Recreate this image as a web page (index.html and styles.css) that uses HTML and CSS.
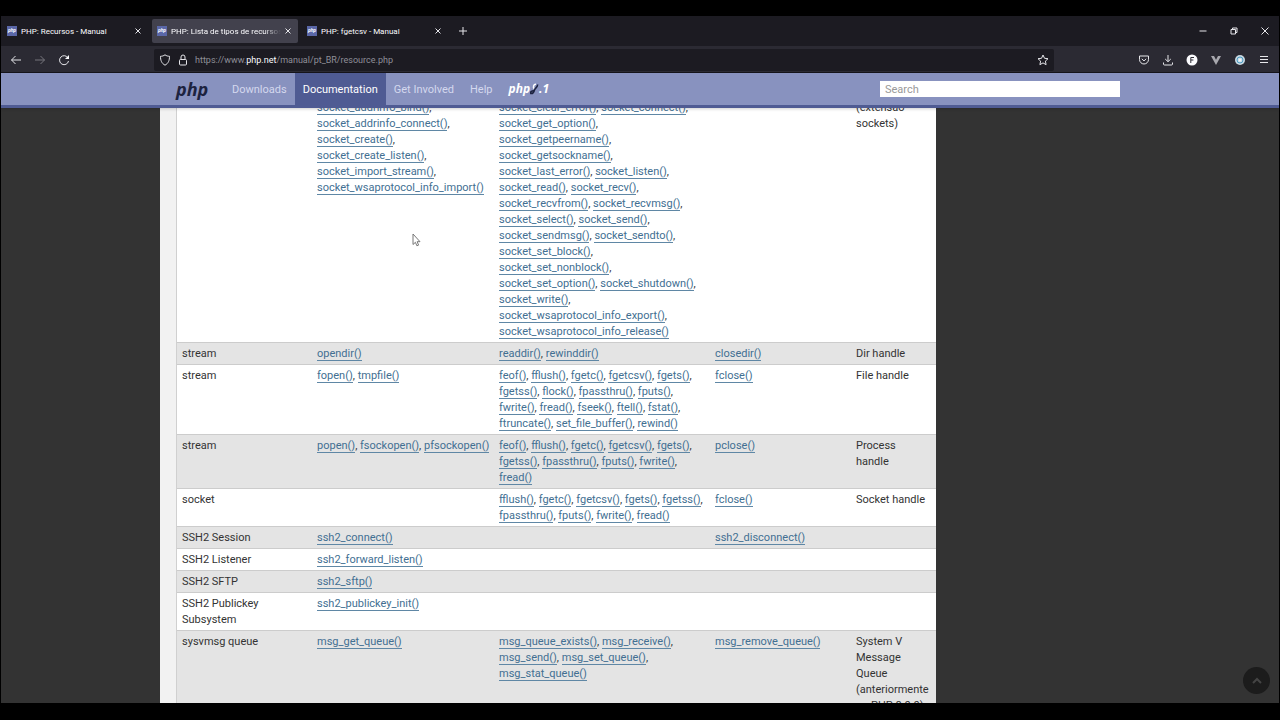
FILE: index.html
```html
<!DOCTYPE html>
<html lang="pt-BR">
<head>
    <meta charset="UTF-8">
    <meta name="viewport" content="width=device-width, initial-scale=1.0">
    <title>PHP: Lista de tipos de recursos - Manual</title>
    <link rel="stylesheet" href="styles.css">
</head>
<body>

<div class="window">

    <!-- Abas -->
    <div class="tabs">
        <div class="tab">
            <span class="favicon">php</span>
            <span class="tab-title">PHP: Recursos - Manual</span>
            <button class="icon-btn" aria-label="Fechar aba"><svg width="6" height="6" viewBox="0 0 6 6"><path d="M.5 .5l5 5M5.5 .5l-5 5"/></svg></button>
        </div>
        <div class="tab active">
            <span class="favicon">php</span>
            <span class="tab-title">PHP: Lista de tipos de recursos</span>
            <button class="icon-btn" aria-label="Fechar aba"><svg width="6" height="6" viewBox="0 0 6 6"><path d="M.5 .5l5 5M5.5 .5l-5 5"/></svg></button>
        </div>
        <div class="tab">
            <span class="favicon">php</span>
            <span class="tab-title">PHP: fgetcsv - Manual</span>
            <button class="icon-btn" aria-label="Fechar aba"><svg width="6" height="6" viewBox="0 0 6 6"><path d="M.5 .5l5 5M5.5 .5l-5 5"/></svg></button>
        </div>
        <button class="icon-btn new-tab" aria-label="Nova aba"><svg width="8" height="8" viewBox="0 0 8 8"><path d="M4 0v8M0 4h8"/></svg></button>
        <div class="controls">
            <button class="icon-btn" aria-label="Minimizar"><svg width="8" height="8" viewBox="0 0 8 8"><path d="M.5 4h7"/></svg></button>
            <button class="icon-btn" aria-label="Restaurar"><svg width="8" height="8" viewBox="0 0 8 8"><path d="M1 2.5h4.500v4.500H1zM2.500 2.500V1H7v4.500H5.500"/></svg></button>
            <button class="icon-btn" aria-label="Fechar"><svg width="8" height="8" viewBox="0 0 8 8"><path d="M.5 .5l7 7M7.500 .5l-7 7"/></svg></button>
        </div>
    </div>

    <!-- Barra de endereço -->
    <div class="toolbar">
        <div class="nav-buttons">
            <button class="icon-btn" aria-label="Voltar"><svg width="12" height="12" viewBox="0 0 12 12"><path d="M11 6H1.500M5.500 2l-4 4 4 4"/></svg></button>
            <button class="icon-btn dim" aria-label="Avançar"><svg width="12" height="12" viewBox="0 0 12 12"><path d="M1 6h9.500M6.500 2l4 4-4 4"/></svg></button>
            <button class="icon-btn" aria-label="Recarregar"><svg width="12" height="12" viewBox="0 0 12 12"><path d="M10 4A4.500 4.500 0 1 0 10.500 7"/><path d="M11 1v4H7z" class="fill"/></svg></button>
        </div>
        <div class="urlbar">
            <svg width="12" height="12" viewBox="0 0 12 12"><path d="M6 .8C4.500 2 3 2.200 1.500 2.300c0 4 1 7 4.500 8.900 3.500-1.900 4.500-4.900 4.500-8.900C9 2.200 7.500 2 6 .8z"/></svg>
            <svg width="12" height="12" viewBox="0 0 12 12"><rect x="2.500" y="5.500" width="7" height="5.500" rx="1"/><path d="M4 5.500V3a2 2 0 0 1 4 0v2.500"/></svg>
            <span class="url">https://www.<b>php.net</b>/manual/pt_BR/resource.php</span>
            <button class="icon-btn" aria-label="Favoritar"><svg width="12" height="12" viewBox="0 0 12 12"><path d="M6 1l1.500 3.300 3.500.4-2.600 2.400.7 3.600L6 8.900l-3.100 1.800.7-3.600L1 4.700l3.500-.4z"/></svg></button>
        </div>
        <div class="extensions">
            <button class="icon-btn" aria-label="Pocket"><svg width="12" height="12" viewBox="0 0 12 12"><path d="M1.500 2h9v3.500a4.500 4.500 0 0 1-9 0zM3.800 4.800L6 6.900l2.200-2.100"/></svg></button>
            <button class="icon-btn" aria-label="Downloads"><svg width="12" height="12" viewBox="0 0 12 12"><path d="M6 1v6.500M3.200 5L6 7.700 8.800 5M1.500 8.500V10a1 1 0 0 0 1 1h7a1 1 0 0 0 1-1V8.500"/></svg></button>
            <button class="icon-btn" aria-label="Extensão"><svg width="12" height="12" viewBox="0 0 12 12"><circle cx="6" cy="6" r="5.500" class="fill"/><path d="M4.800 9V3.500H8M4.800 6h2.600" class="dark"/></svg></button>
            <button class="icon-btn" aria-label="Vue"><svg width="12" height="12" viewBox="0 0 12 12"><path d="M1 2h3l2 3.800L8 2h3L6 11z" class="gray"/></svg></button>
            <button class="icon-btn" aria-label="React"><svg width="12" height="12" viewBox="0 0 12 12"><circle cx="6" cy="6" r="5" fill="#c9d8e2" stroke="none"/><circle cx="6" cy="6" r="3" stroke="#4a9cc4"/><circle cx="6" cy="6" r="1.500" fill="#eef6fa" stroke="none"/></svg></button>
            <button class="icon-btn" aria-label="Menu"><svg width="12" height="12" viewBox="0 0 12 12"><path d="M2 2.500h8M2 5.500h8M2 8.500h8"/></svg></button>
        </div>
    </div>

    <div class="page">
        <header class="site-header">
            <div class="container header-inner">
                <a href="#" class="logo">php</a>
                <nav class="menu">
                    <a href="#">Downloads</a>
                    <a href="#" class="current">Documentation</a>
                    <a href="#">Get Involved</a>
                    <a href="#">Help</a>
                    <a href="#" class="release">php<svg width="9" height="12" viewBox="0 0 9 12"><path d="M4.500 6C2.500 4.500 3.500 1 6 1.200" stroke="#fff" stroke-width="1.500"/><path d="M7.500 1.500C8 4 5 5 4.500 7S3 11 .8 10.500c-.8-2 1.500-3 3-2.800" stroke="#1d2340" stroke-width="1.500"/></svg>.1</a>
                </nav>
                <input type="search" class="search" placeholder="Search" aria-label="Search">
            </div>
        </header>

        <main class="container">
            <div class="content">
                <table class="resources">
                    <colgroup>
                        <col class="col-type">
                        <col class="col-created">
                        <col class="col-used">
                        <col class="col-destroyed">
                        <col class="col-desc">
                    </colgroup>
                    <tbody>
                        <tr>
                            <td></td>
                            <td><a href="#">socket_addrinfo_bind()</a>,<br><a href="#">socket_addrinfo_connect()</a>,<br><a href="#">socket_create()</a>,<br><a href="#">socket_create_listen()</a>,<br><a href="#">socket_import_stream()</a>,<br><a href="#">socket_wsaprotocol_info_import()</a></td>
                            <td><a href="#">socket_clear_error()</a>, <a href="#">socket_connect()</a>,<br><a href="#">socket_get_option()</a>,<br><a href="#">socket_getpeername()</a>,<br><a href="#">socket_getsockname()</a>,<br><a href="#">socket_last_error()</a>, <a href="#">socket_listen()</a>,<br><a href="#">socket_read()</a>, <a href="#">socket_recv()</a>,<br><a href="#">socket_recvfrom()</a>, <a href="#">socket_recvmsg()</a>,<br><a href="#">socket_select()</a>, <a href="#">socket_send()</a>,<br><a href="#">socket_sendmsg()</a>, <a href="#">socket_sendto()</a>,<br><a href="#">socket_set_block()</a>,<br><a href="#">socket_set_nonblock()</a>,<br><a href="#">socket_set_option()</a>, <a href="#">socket_shutdown()</a>,<br><a href="#">socket_write()</a>,<br><a href="#">socket_wsaprotocol_info_export()</a>,<br><a href="#">socket_wsaprotocol_info_release()</a></td>
                            <td></td>
                            <td>(extensão<br>sockets)</td>
                        </tr>
                        <tr>
                            <td>stream</td>
                            <td><a href="#">opendir()</a></td>
                            <td><a href="#">readdir()</a>, <a href="#">rewinddir()</a></td>
                            <td><a href="#">closedir()</a></td>
                            <td>Dir handle</td>
                        </tr>
                        <tr>
                            <td>stream</td>
                            <td><a href="#">fopen()</a>, <a href="#">tmpfile()</a></td>
                            <td><a href="#">feof()</a>, <a href="#">fflush()</a>, <a href="#">fgetc()</a>, <a href="#">fgetcsv()</a>, <a href="#">fgets()</a>,<br><a href="#">fgetss()</a>, <a href="#">flock()</a>, <a href="#">fpassthru()</a>, <a href="#">fputs()</a>,<br><a href="#">fwrite()</a>, <a href="#">fread()</a>, <a href="#">fseek()</a>, <a href="#">ftell()</a>, <a href="#">fstat()</a>,<br><a href="#">ftruncate()</a>, <a href="#">set_file_buffer()</a>, <a href="#">rewind()</a></td>
                            <td><a href="#">fclose()</a></td>
                            <td>File handle</td>
                        </tr>
                        <tr>
                            <td>stream</td>
                            <td><a href="#">popen()</a>, <a href="#">fsockopen()</a>, <a href="#">pfsockopen()</a></td>
                            <td><a href="#">feof()</a>, <a href="#">fflush()</a>, <a href="#">fgetc()</a>, <a href="#">fgetcsv()</a>, <a href="#">fgets()</a>,<br><a href="#">fgetss()</a>, <a href="#">fpassthru()</a>, <a href="#">fputs()</a>, <a href="#">fwrite()</a>,<br><a href="#">fread()</a></td>
                            <td><a href="#">pclose()</a></td>
                            <td>Process<br>handle</td>
                        </tr>
                        <tr>
                            <td>socket</td>
                            <td></td>
                            <td><a href="#">fflush()</a>, <a href="#">fgetc()</a>, <a href="#">fgetcsv()</a>, <a href="#">fgets()</a>, <a href="#">fgetss()</a>,<br><a href="#">fpassthru()</a>, <a href="#">fputs()</a>, <a href="#">fwrite()</a>, <a href="#">fread()</a></td>
                            <td><a href="#">fclose()</a></td>
                            <td>Socket handle</td>
                        </tr>
                        <tr>
                            <td>SSH2 Session</td>
                            <td><a href="#">ssh2_connect()</a></td>
                            <td></td>
                            <td><a href="#">ssh2_disconnect()</a></td>
                            <td></td>
                        </tr>
                        <tr>
                            <td>SSH2 Listener</td>
                            <td><a href="#">ssh2_forward_listen()</a></td>
                            <td></td>
                            <td></td>
                            <td></td>
                        </tr>
                        <tr>
                            <td>SSH2 SFTP</td>
                            <td><a href="#">ssh2_sftp()</a></td>
                            <td></td>
                            <td></td>
                            <td></td>
                        </tr>
                        <tr>
                            <td>SSH2 Publickey<br>Subsystem</td>
                            <td><a href="#">ssh2_publickey_init()</a></td>
                            <td></td>
                            <td></td>
                            <td></td>
                        </tr>
                        <tr>
                            <td>sysvmsg queue</td>
                            <td><a href="#">msg_get_queue()</a></td>
                            <td><a href="#">msg_queue_exists()</a>, <a href="#">msg_receive()</a>,<br><a href="#">msg_send()</a>, <a href="#">msg_set_queue()</a>,<br><a href="#">msg_stat_queue()</a></td>
                            <td><a href="#">msg_remove_queue()</a></td>
                            <td>System V<br>Message<br>Queue<br>(anteriormente<br>ao PHP 8.0.0)</td>
                        </tr>
                    </tbody>
                </table>
            </div>
        </main>

        <button class="to-top" aria-label="Voltar ao topo"><svg width="10" height="8" viewBox="0 0 10 8"><path d="M1 6l4-4 4 4"/></svg></button>
        <svg class="cursor" width="9" height="14" viewBox="0 0 9 14"><path d="M1 1v10.500l2.400-2.200 1.500 3.500 1.700-.7-1.500-3.400H8z"/></svg>
    </div>

</div>

</body>
</html>
```

FILE: styles.css
```css
* {
    box-sizing: border-box;
}

body {
    margin: 0;
    padding: 16px 1px 17px;
    height: 100vh;
    background-color: #000;
    font-family: Roboto, "Noto Sans", sans-serif;
}

.window {
    display: flex;
    flex-direction: column;
    height: 100%;
    overflow: hidden;
}

svg {
    display: block;
    fill: none;
    stroke: #e6e6ea;
}

.icon-btn {
    display: flex;
    padding: 0;
    border: none;
    background: none;
    cursor: pointer;
}

.fill {
    fill: #fbfbfe;
    stroke: none;
}

.dark {
    stroke: #2b2a33;
}

.gray {
    fill: #a8a8ae;
    stroke: none;
}

.dim {
    opacity: 0.4;
}

/* abas */
.tabs {
    display: flex;
    align-items: center;
    height: 30px;
    padding-left: 1px;
    background-color: #1c1b22;
    font-size: 8px;
    color: #fbfbfe;
}

.tab {
    display: flex;
    align-items: center;
    gap: 4px;
    width: 146px;
    height: 24px;
    margin-right: 4px;
    padding: 0 7px 0 5px;
    border-radius: 2px;
}

.tab.active {
    background-color: #42414d;
}

.favicon {
    width: 10px;
    height: 10px;
    background-color: #5a67a8;
    font-size: 5px;
    font-style: italic;
    font-weight: bold;
    line-height: 9px;
    text-align: center;
}

.tab-title {
    flex: 1;
    overflow: hidden;
    white-space: nowrap;
}

.active .tab-title {
    mask-image: linear-gradient(to right, #000 85%, transparent);
}

.new-tab {
    margin-left: 7px;
}

.controls {
    display: flex;
    gap: 23px;
    margin-left: auto;
    padding-right: 10px;
}

/* barra de endereco */
.toolbar {
    display: flex;
    align-items: center;
    height: 27px;
    padding-top: 2px;
    background-color: #2b2a33;
    border-bottom: 1px solid #15141a;
}

.nav-buttons {
    display: flex;
    gap: 12px;
    width: 153px;
    padding-left: 9px;
}

.urlbar {
    flex: 1;
    display: flex;
    align-items: center;
    gap: 6px;
    height: 22px;
    padding: 0 5px;
    border-radius: 2px;
    background-color: #1c1b22;
}

.url {
    flex: 1;
    font-size: 9px;
    color: #8f8f98;
}

.url b {
    font-weight: normal;
    color: #fbfbfe;
}

.extensions {
    display: flex;
    justify-content: flex-end;
    gap: 12px;
    width: 225px;
    padding-right: 9px;
}

/* site */
.page {
    position: relative;
    flex: 1;
    min-height: 0;
    overflow: hidden;
    background-color: #333;
}

.container {
    width: 100%;
    max-width: 960px;
    margin: 0 auto;
}

.site-header {
    position: relative;
    z-index: 1;
    height: 35px;
    margin-bottom: -12px;
    background-color: #8892bf;
    border-bottom: 3px solid #4f5b93;
    box-shadow: 0 1px 3px rgba(0, 0, 0, 0.2);
}

.header-inner {
    display: flex;
    align-items: center;
    height: 32px;
    padding-left: 16px;
}

.logo {
    width: 48px;
    font-family: "Open Sans", sans-serif;
    font-size: 18px;
    font-style: italic;
    font-weight: bold;
    line-height: 24px;
    color: #1d2340;
    text-decoration: none;
}

.menu {
    display: flex;
    height: 100%;
}

.menu a {
    padding: 0 8px;
    font-size: 11px;
    line-height: 34px;
    color: #d4d8ee;
    text-decoration: none;
}

.menu .current {
    background-color: #4f5b93;
    color: #fff;
}

.menu .release {
    display: flex;
    align-items: center;
    font-family: "Open Sans", sans-serif;
    font-size: 12px;
    font-style: italic;
    font-weight: bold;
    color: #fff;
}

.search {
    width: 240px;
    height: 16px;
    margin-left: auto;
    padding: 0 5px;
    border: none;
    background-color: #fff;
    font-family: inherit;
    font-size: 11px;
}

.search::placeholder {
    color: #999;
}

.content {
    width: 776px;
    padding-left: 16px;
    background-color: #f2f2f2;
}

.resources {
    width: 100%;
    table-layout: fixed;
    border-collapse: separate;
    border-spacing: 0;
    border-left: 1px solid #d0d0d0;
    background-color: #fff;
    font-size: 11px;
    line-height: 16px;
    color: #333;
}

.col-type {
    width: 135px;
}

.col-created {
    width: 182px;
}

.col-used {
    width: 216px;
}

.col-destroyed {
    width: 141px;
}

.resources td {
    height: 22px;
    padding: 3px 5px 2px;
    border-top: 1px solid #ccc;
    vertical-align: top;
    white-space: nowrap;
}

.resources tr:nth-child(even) {
    background-color: #e4e4e4;
}

.resources a {
    border-bottom: 1px solid #5f87a5;
    color: #426f92;
    text-decoration: none;
}

.to-top {
    position: absolute;
    right: 9px;
    bottom: 9px;
    display: flex;
    align-items: center;
    justify-content: center;
    width: 27px;
    height: 27px;
    padding: 0;
    border: none;
    border-radius: 50%;
    background-color: #1c1c1c;
}

.to-top svg {
    stroke: #444;
    stroke-width: 2;
}

/* ponteiro do mouse */
.cursor {
    position: absolute;
    top: 160px;
    left: 411px;
    fill: #fff;
    stroke: #777;
}
```
